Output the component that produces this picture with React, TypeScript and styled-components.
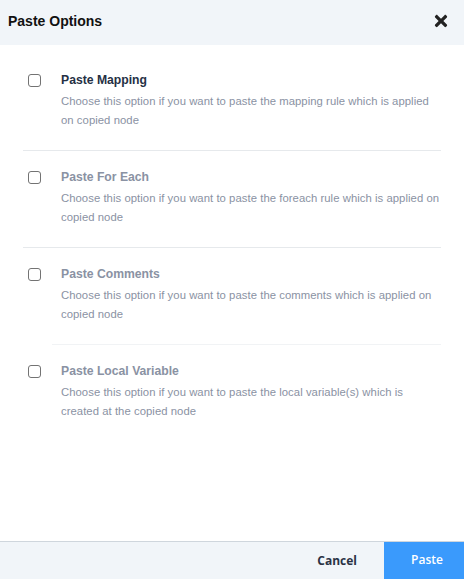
import styled, { createGlobalStyle } from 'styled-components'
import { FaTimes } from 'react-icons/fa'

type OptionType = {
  title: string
  description: string
  active?: boolean
  inset?: boolean
}

const options: OptionType[] = [
  {
    title: 'Paste Mapping',
    description:
      'Choose this option if you want to paste the mapping rule which is applied on copied node',
    active: true,
  },
  {
    title: 'Paste For Each',
    description:
      'Choose this option if you want to paste the foreach rule which is applied on copied node',
  },
  {
    title: 'Paste Comments',
    description:
      'Choose this option if you want to paste the comments which is applied on copied node',
    inset: true,
  },
  {
    title: 'Paste Local Variable',
    description:
      'Choose this option if you want to paste the local variable(s) which is created at the copied node',
  },
]

const App: React.FC = () => {
  return (
    <>
      <GlobalStyle />
      <Dialog>
        <Header>
          <Title>Paste Options</Title>
          <CloseButton aria-label="close">
            <FaTimes size={18} />
          </CloseButton>
        </Header>
        <Body>
          {options.map((option, i) => (
            <Row key={option.title} inset={!!option.inset} last={i === options.length - 1}>
              <Check />
              <Text>
                <OptionTitle active={!!option.active}>{option.title}</OptionTitle>
                <Description>{option.description}</Description>
              </Text>
            </Row>
          ))}
        </Body>
        <Footer>
          <CancelButton>Cancel</CancelButton>
          <PasteButton>Paste</PasteButton>
        </Footer>
      </Dialog>
    </>
  )
}

const GlobalStyle = createGlobalStyle`
  html, body {
    margin: 0;
    padding: 0;
    background: #ffffff;
  }
  * {
    box-sizing: border-box;
  }
`

const Dialog = styled.div`
  width: 464px;
  height: 579px;
  display: flex;
  flex-direction: column;
  background: #ffffff;
  font-family: 'Liberation Sans', Arial, sans-serif;
`

const Header = styled.div`
  height: 45px;
  flex-shrink: 0;
  display: flex;
  align-items: center;
  justify-content: space-between;
  padding: 0 14px 0 8px;
  background: #f1f5f9;
`

const Title = styled.div`
  font-size: 14px;
  font-weight: 700;
  color: #111111;
  padding-bottom: 4px;
`

const CloseButton = styled.div`
  display: flex;
  align-items: center;
  color: #222222;
  padding-bottom: 3px;
`

const Body = styled.div`
  flex: 1;
  padding: 10px 23px 0 23px;
`

type RowStyleType = {
  inset: boolean
  last: boolean
}

const Row = styled.div<RowStyleType>(
  (style) => `
    position: relative;
    display: flex;
    padding: 15px 0 21px 0;
    ${
      style.last
        ? ''
        : `&::after {
      content: '';
      position: absolute;
      left: ${style.inset ? '29px' : '0'};
      right: 0;
      bottom: 0;
      height: 1px;
      background: ${style.inset ? '#f1f3f5' : '#e6e9ec'};
    }`
    }
    border-bottom: 1px solid transparent;
  `
)

const Check = styled.span`
  width: 13px;
  height: 13px;
  margin: 4px 0 0 5px;
  flex-shrink: 0;
  border: 1.5px solid #737373;
  border-radius: 3px;
  background: #ffffff;
`

const Text = styled.div`
  margin-left: 20px;
  flex: 1;
`

type OptionTitleStyleType = {
  active: boolean
}

const OptionTitle = styled.div<OptionTitleStyleType>(
  (style) => `
    font-size: 12.2px;
    font-weight: 700;
    line-height: 20px;
    color: ${style.active ? '#253044' : '#8a92a3'};
  `
)

const Description = styled.div`
  margin-top: 2px;
  font-size: 11.3px;
  letter-spacing: 0.05px;
  line-height: 19px;
  color: #8a92a3;
`

const Footer = styled.div`
  height: 38px;
  flex-shrink: 0;
  display: flex;
  justify-content: flex-end;
  border-top: 1px solid #cfd6dd;
  background: #f1f5f9;
  font-family: 'Open Sans', sans-serif;
`

const CancelButton = styled.div`
  display: flex;
  align-items: center;
  padding: 0 27px 0 0;
  font-size: 12px;
  font-weight: 700;
  color: #2a3245;
`

const PasteButton = styled.div`
  width: 80px;
  display: flex;
  align-items: center;
  justify-content: center;
  padding: 0 0 2px 6px;
  background: #3a9afc;
  font-size: 12px;
  font-weight: 600;
  color: #ffffff;
`

export default App
